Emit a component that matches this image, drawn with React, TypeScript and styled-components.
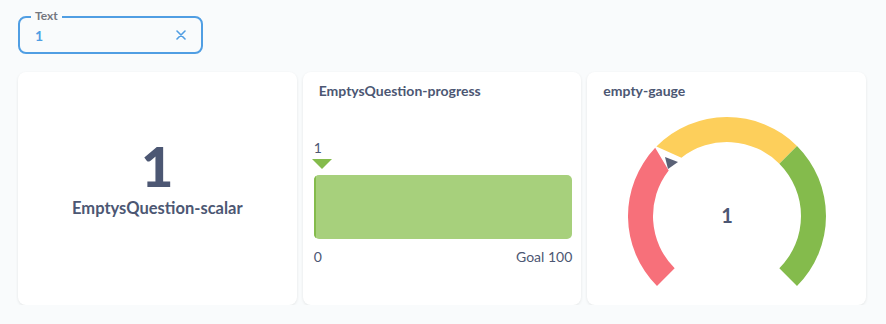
import React from 'react';
import styled, { createGlobalStyle } from 'styled-components';

const GlobalStyle = createGlobalStyle`
  * {
    margin: 0;
    padding: 0;
    box-sizing: border-box;
  }
  body {
    font-family: Lato, "Open Sans", sans-serif;
    background-color: #f9fbfc;
    color: #4c5773;
  }
`;

const Page = styled.div`
  padding: 16px 20px 0 18px;
`;

const FilterBox = styled.div`
  position: relative;
  width: 185px;
  height: 38px;
  border: 2px solid #509ee3;
  border-radius: 8px;
  display: flex;
  align-items: center;
  justify-content: space-between;
  padding: 0 15px 0 15px;
`;

const FilterLabel = styled.span`
  position: absolute;
  top: -10px;
  left: 11px;
  padding: 0 4px;
  background-color: #f9fbfc;
  font-size: 12px;
  line-height: 16px;
  font-weight: 700;
  color: #74777f;
`;

const FilterValue = styled.span`
  font-size: 14px;
  font-weight: 700;
  color: #509ee3;
`;

const ClearButton = styled.button`
  border: none;
  background: none;
  display: flex;
  align-items: center;
  color: #509ee3;
  cursor: pointer;
`;

const Grid = styled.div`
  display: grid;
  grid-template-columns: repeat(3, 1fr);
  gap: 6px;
  margin-top: 18px;
`;

const Card = styled.div`
  height: 233px;
  background-color: #ffffff;
  border-radius: 8px;
  box-shadow: 0 1px 3px rgba(0, 0, 0, 0.09);
  display: flex;
  flex-direction: column;
`;

const CardTitle = styled.div`
  padding: 10px 16px 0 16px;
  font-size: 14px;
  line-height: 18px;
  font-weight: 700;
  color: #4c5773;
`;

const ScalarBody = styled.div`
  flex: 1;
  display: flex;
  flex-direction: column;
  align-items: center;
  justify-content: center;
  padding-bottom: 23px;
  gap: 2px;
`;

const ScalarValue = styled.div`
  font-size: 56px;
  line-height: 60px;
  font-weight: 900;
  color: #4c5773;
`;

const ScalarTitle = styled.div`
  font-size: 16.5px;
  line-height: 20px;
  font-weight: 700;
  color: #4c5773;
`;

const ProgressBody = styled.div`
  padding: 0 9px 0 11px;
  margin-top: 39px;
  display: flex;
  flex-direction: column;
`;

const ProgressValue = styled.div`
  font-size: 14px;
  line-height: 17px;
  color: #4c5773;
`;

const Pointer = styled.div`
  margin-top: 3px;
  margin-left: -2px;
  width: 0;
  height: 0;
  border-left: 10px solid transparent;
  border-right: 10px solid transparent;
  border-top: 10px solid #84bb4c;
`;

const Bar = styled.div`
  margin-top: 6px;
  height: 64px;
  border-radius: 5px;
  background-color: #a7d07c;
  overflow: hidden;
  display: flex;
`;

const BarFill = styled.div`
  background-color: #84bb4c;
  height: 100%;
`;

const BarLabels = styled.div`
  margin-top: 9px;
  display: flex;
  justify-content: space-between;
  font-size: 14px;
  line-height: 18px;
  color: #4c5773;
`;

const GaugeWrap = styled.div`
  margin-top: 16px;
  display: flex;
  justify-content: center;
`;

const CX = 100;
const CY = 100;
const R_OUT = 99;
const R_IN = 74;

const pt = (r: number, deg: number) => {
  const a = (deg * Math.PI) / 180;
  return [CX + r * Math.sin(a), CY - r * Math.cos(a)];
};

// annular segment whose start/end edges may lean (outer and inner angles differ)
const segment = (o0: number, i0: number, o1: number, i1: number) => {
  const [ax, ay] = pt(R_OUT, o0);
  const [bx, by] = pt(R_OUT, o1);
  const [cx, cy] = pt(R_IN, i1);
  const [dx, dy] = pt(R_IN, i0);
  const bigOut = o1 - o0 > 180 ? 1 : 0;
  const bigIn = i1 - i0 > 180 ? 1 : 0;
  return `M${ax} ${ay} A${R_OUT} ${R_OUT} 0 ${bigOut} 1 ${bx} ${by} L${cx} ${cy} A${R_IN} ${R_IN} 0 ${bigIn} 0 ${dx} ${dy} Z`;
};

const Gauge: React.FC<{ value: number }> = ({ value }) => (
  <svg width="200" height="176" viewBox="0 0 200 176">
    <path d={segment(-135, -135, -46.5, -52)} fill="#f7707a" />
    <path d={segment(-45.5, -38, 45, 45)} fill="#fdcf5b" />
    <path d={segment(45, 45, 135, 135)} fill="#84bb4c" />
    <polygon points="38,41 51,46 41,53" fill="#5a6176" />
    <text
      x={CX}
      y={CY + 7}
      textAnchor="middle"
      fontFamily="Lato, sans-serif"
      fontSize="20"
      fontWeight="700"
      fill="#4c5773"
    >
      {value}
    </text>
  </svg>
);

export default function App() {
  const progress = 1;
  const goal = 100;

  return (
    <>
      <GlobalStyle />
      <Page>
        <FilterBox>
          <FilterLabel>Text</FilterLabel>
          <FilterValue>1</FilterValue>
          <ClearButton>
            <svg width="10" height="10" viewBox="0 0 10 10">
              <path d="M1 1 L9 9 M9 1 L1 9" stroke="currentColor" strokeWidth="1.6" strokeLinecap="round" />
            </svg>
          </ClearButton>
        </FilterBox>
        <Grid>
          <Card>
            <ScalarBody>
              <ScalarValue>1</ScalarValue>
              <ScalarTitle>EmptysQuestion-scalar</ScalarTitle>
            </ScalarBody>
          </Card>
          <Card>
            <CardTitle>EmptysQuestion-progress</CardTitle>
            <ProgressBody>
              <ProgressValue>{progress}</ProgressValue>
              <Pointer />
              <Bar>
                <BarFill style={{ width: `${Math.max((progress / goal) * 100, 0.8)}%` }} />
              </Bar>
              <BarLabels>
                <span>0</span>
                <span>Goal {goal}</span>
              </BarLabels>
            </ProgressBody>
          </Card>
          <Card>
            <CardTitle>empty-gauge</CardTitle>
            <GaugeWrap>
              <Gauge value={1} />
            </GaugeWrap>
          </Card>
        </Grid>
      </Page>
    </>
  );
}
